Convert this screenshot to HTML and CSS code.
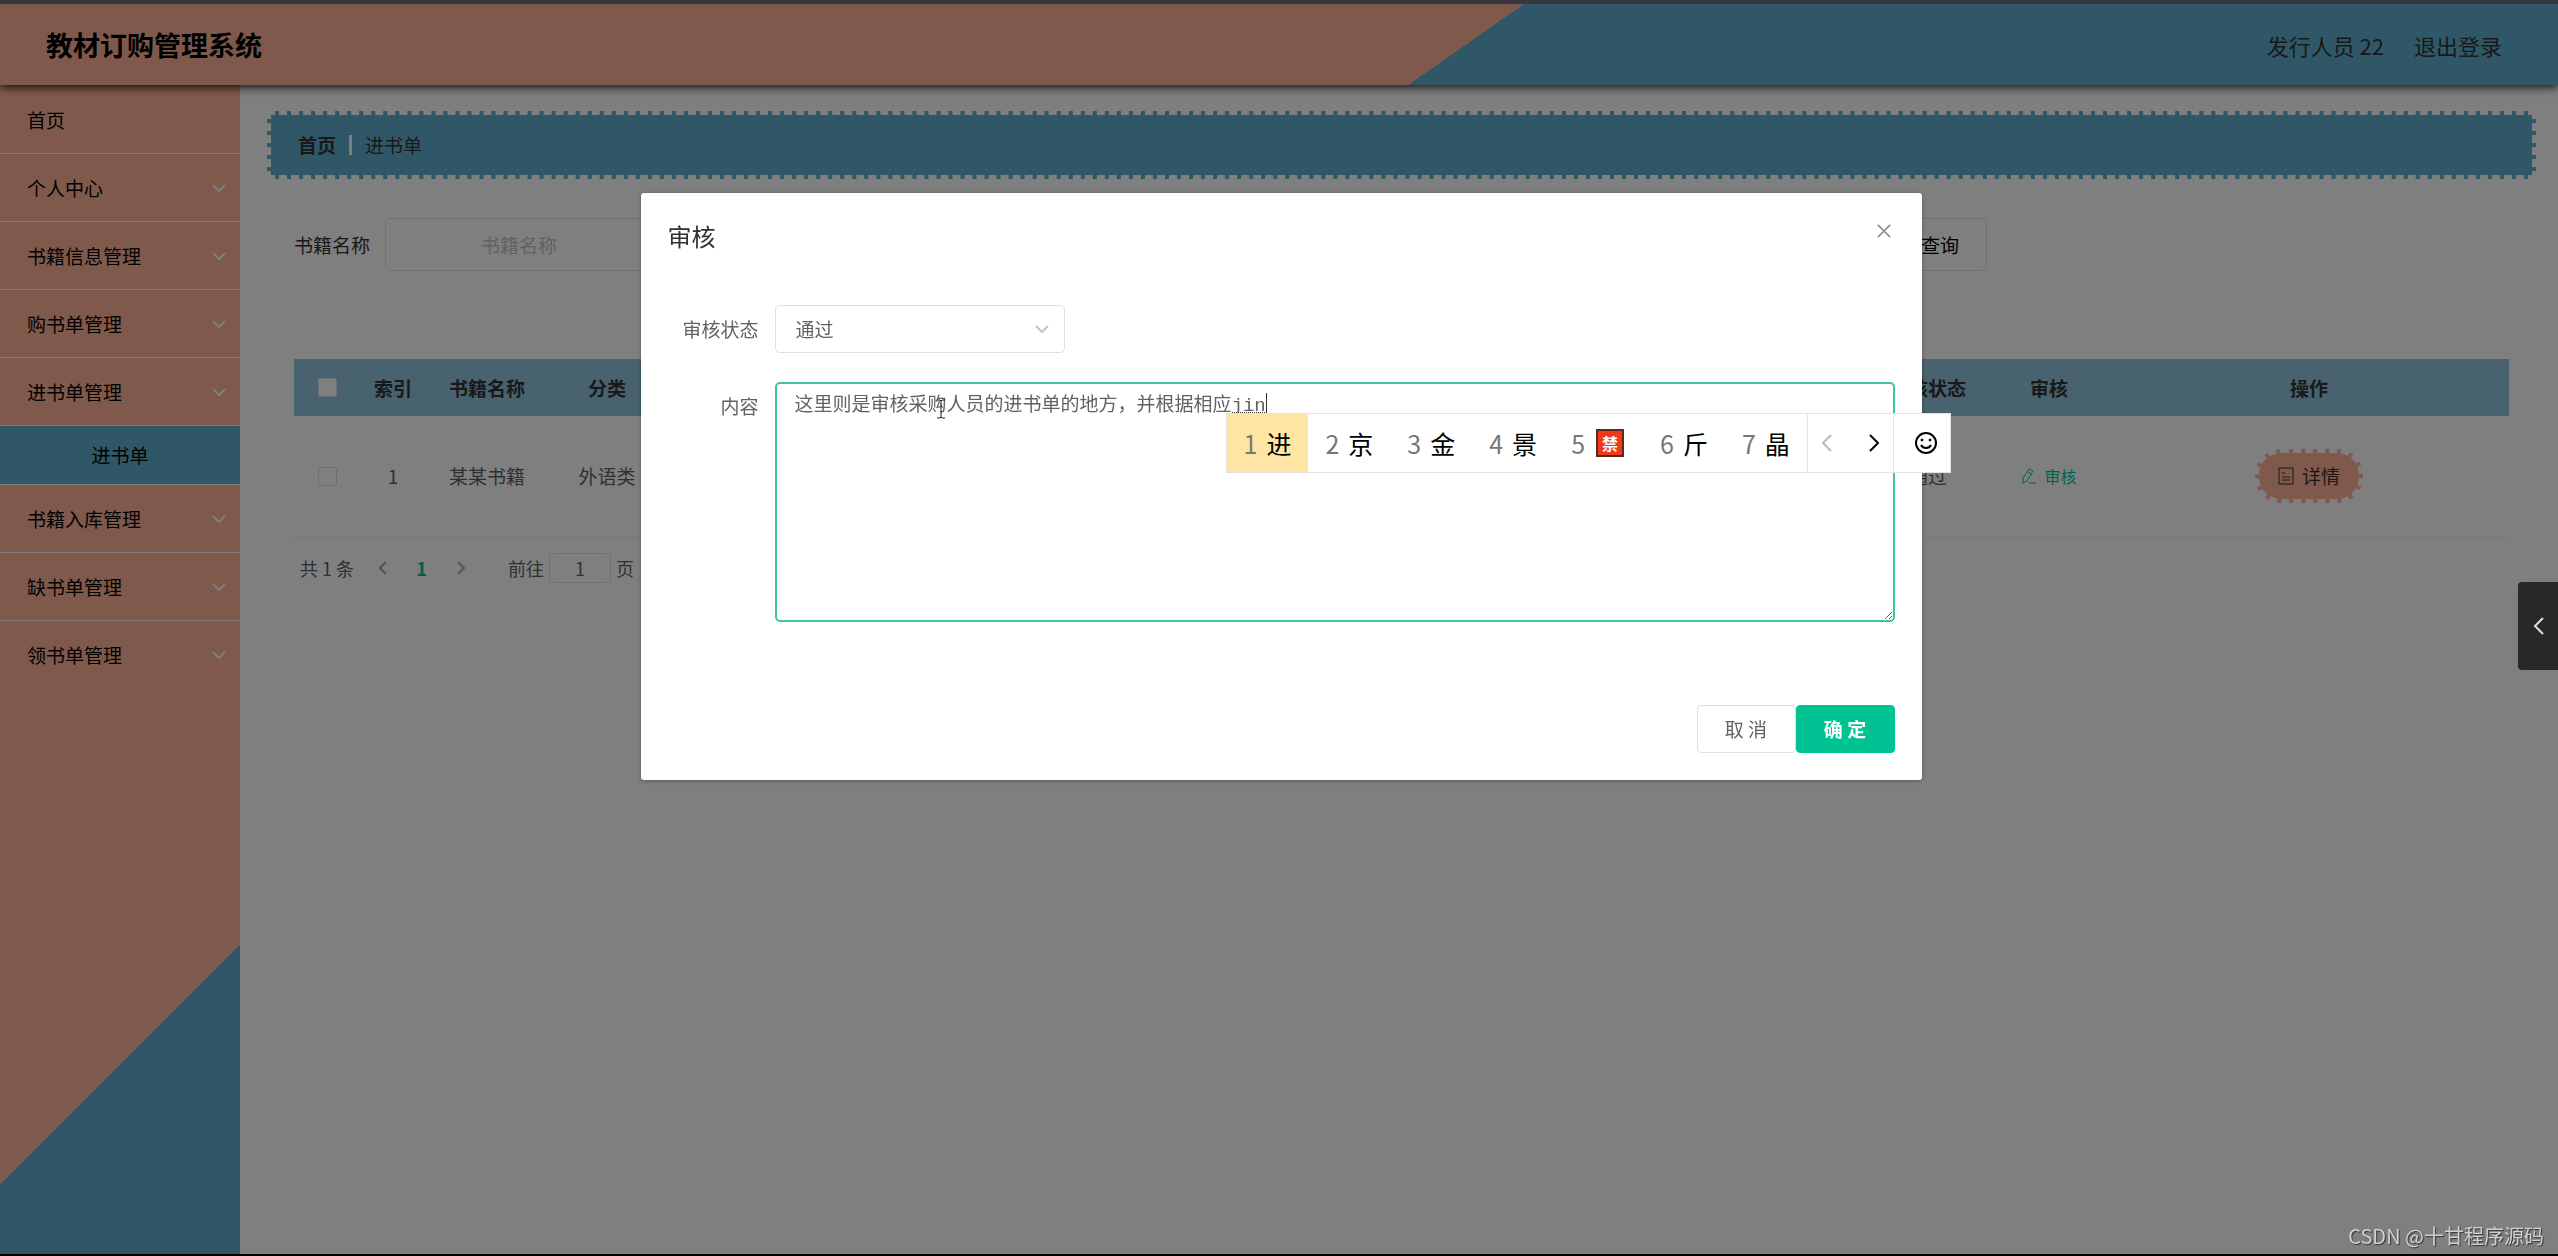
FILE: index.html
```html
<!DOCTYPE html>
<html lang="zh-CN">
<head>
    <meta charset="UTF-8">
    <meta name="viewport" content="width=device-width, initial-scale=1.0">
    <title>教材订购管理系统</title>
    <link rel="stylesheet" href="styles.css">
</head>
<body>
    <header class="header">
        <h1 class="header-title">教材订购管理系统</h1>
        <div class="header-user">
            <span>发行人员 22</span>
            <a href="#">退出登录</a>
        </div>
    </header>

    <div class="layout">
        <nav class="sidebar">
            <a class="menu-item" href="#">首页</a>
            <a class="menu-item" href="#">个人中心 <svg class="arrow" viewBox="0 0 14 8"><path d="M1 1l6 6 6-6"/></svg></a>
            <a class="menu-item" href="#">书籍信息管理 <svg class="arrow" viewBox="0 0 14 8"><path d="M1 1l6 6 6-6"/></svg></a>
            <a class="menu-item" href="#">购书单管理 <svg class="arrow" viewBox="0 0 14 8"><path d="M1 1l6 6 6-6"/></svg></a>
            <a class="menu-item" href="#">进书单管理 <svg class="arrow" viewBox="0 0 14 8"><path d="M1 1l6 6 6-6"/></svg></a>
            <a class="submenu-item" href="#">进书单</a>
            <a class="menu-item" href="#">书籍入库管理 <svg class="arrow" viewBox="0 0 14 8"><path d="M1 1l6 6 6-6"/></svg></a>
            <a class="menu-item" href="#">缺书单管理 <svg class="arrow" viewBox="0 0 14 8"><path d="M1 1l6 6 6-6"/></svg></a>
            <a class="menu-item last" href="#">领书单管理 <svg class="arrow" viewBox="0 0 14 8"><path d="M1 1l6 6 6-6"/></svg></a>
        </nav>

        <main class="main">
            <div class="breadcrumb">
                <a href="#">首页</a>
                <span class="separator"></span>
                <span>进书单</span>
            </div>

            <div class="content">
                <form class="search">
                    <label for="bookname">书籍名称</label>
                    <input type="text" id="bookname" placeholder="书籍名称">
                    <button type="button" id="query">查询</button>
                </form>

                <table class="list">
                    <colgroup>
                        <col class="col-check">
                        <col class="col-index">
                        <col class="col-name">
                        <col class="col-type">
                        <col>
                        <col class="col-status">
                        <col class="col-audit">
                        <col class="col-action">
                    </colgroup>
                    <thead>
                        <tr>
                            <th><input type="checkbox" aria-label="全选"></th>
                            <th>索引</th>
                            <th>书籍名称</th>
                            <th>分类</th>
                            <th></th>
                            <th>审核状态</th>
                            <th>审核</th>
                            <th>操作</th>
                        </tr>
                    </thead>
                    <tbody>
                        <tr>
                            <td><input type="checkbox" aria-label="选择"></td>
                            <td>1</td>
                            <td>某某书籍</td>
                            <td>外语类</td>
                            <td></td>
                            <td>通过</td>
                            <td>
                                <button type="button" class="btn-audit">
                                    <svg viewBox="0 0 16 16"><path d="M8 1l4 2-6 10-4 2V10zM7 4l3 2M8 15h7"/></svg>
                                    审核
                                </button>
                            </td>
                            <td>
                                <button type="button" class="btn-detail">
                                    <svg viewBox="0 0 16 18"><path d="M1 1h14v16H1zM4 6h3M4 10h8M4 13h8"/></svg>
                                    详情
                                </button>
                            </td>
                        </tr>
                    </tbody>
                </table>

                <div class="pagination">
                    <span>共 1 条</span>
                    <button type="button" aria-label="上一页"><svg viewBox="0 0 8 14"><path d="M7 1L1 7l6 6"/></svg></button>
                    <button type="button" class="current">1</button>
                    <button type="button" aria-label="下一页"><svg viewBox="0 0 8 14"><path d="M1 1l6 6-6 6"/></svg></button>
                    <label for="jump">前往</label>
                    <input type="text" id="jump" value="1">
                    <span>页</span>
                </div>
            </div>
        </main>
    </div>

    <div class="overlay">
        <div class="dialog" role="dialog" aria-labelledby="dialog-title">
            <div class="dialog-header">
                <h2 id="dialog-title">审核</h2>
                <button type="button" class="close" aria-label="关闭"><svg viewBox="0 0 16 16"><path d="M1 1l14 14M15 1L1 15"/></svg></button>
            </div>
            <form class="dialog-form">
                <div class="form-row">
                    <label for="status">审核状态</label>
                    <div class="select-box">
                        <select id="status">
                            <option>通过</option>
                        </select>
                        <svg class="arrow" viewBox="0 0 14 8"><path d="M1 1l6 6 6-6"/></svg>
                    </div>
                </div>
                <div class="form-row">
                    <label for="reply">内容</label>
                    <div class="textarea-box">
                        <textarea id="reply">这里则是审核采购人员的进书单的地方，并根据相应jin</textarea>
                        <span class="composing"></span>
                        <svg class="cursor" viewBox="0 0 10 20"><path d="M1 1h3l1 1 1-1h3M5 2v16M1 19h3l1-1 1 1h3"/></svg>
                        <!-- 输入法候选框 -->
                        <div class="ime">
                            <ol class="ime-list">
                                <li class="active"><i>1</i>进</li>
                                <li><i>2</i>京</li>
                                <li><i>3</i>金</li>
                                <li><i>4</i>景</li>
                                <li><i>5</i><span class="emoji">禁</span></li>
                                <li><i>6</i>斤</li>
                                <li><i>7</i>晶</li>
                            </ol>
                            <div class="ime-nav">
                                <svg class="prev" viewBox="0 0 10 18"><path d="M9 1L1 9l8 8"/></svg>
                                <svg viewBox="0 0 10 18"><path d="M1 1l8 8-8 8"/></svg>
                            </div>
                            <div class="ime-face">
                                <svg viewBox="0 0 24 24"><circle cx="12" cy="12" r="10"/><path d="M7 14c2 4 8 4 10 0"/><circle class="eye" cx="8" cy="9" r="1"/><circle class="eye" cx="16" cy="9" r="1"/></svg>
                            </div>
                        </div>
                    </div>
                </div>
            </form>
            <div class="dialog-footer">
                <button type="button">取 消</button>
                <button type="button" class="primary">确 定</button>
            </div>
        </div>
    </div>

    <button type="button" class="drawer" aria-label="展开"><svg viewBox="0 0 12 20"><path d="M10 2L2 10l8 8"/></svg></button>
    <div class="watermark">CSDN @十甘程序源码</div>
</body>
</html>
```

FILE: styles.css
```css
* {
    box-sizing: border-box;
}
body {
    display: flex;
    flex-direction: column;
    min-height: 100vh;
    margin: 0;
    border-top: 4px solid #36363e;
    border-bottom: 2px solid #000;
    font-family: "Noto Sans CJK SC", sans-serif;
    font-size: 19px;
    line-height: 28px;
    color: #606266;
    background-color: #fff;
}
button, input, select {
    font-family: inherit;
    font-size: inherit;
    line-height: inherit;
    color: inherit;
}
button {
    padding: 0;
    border: none;
    background: none;
    cursor: pointer;
}
a {
    color: inherit;
    text-decoration: none;
}
svg {
    fill: none;
    stroke: currentColor;
}

/* header */
.header {
    display: flex;
    align-items: center;
    justify-content: space-between;
    height: 81px;
    padding: 0 56px 0 46px;
    background: linear-gradient(145deg, #ffb296 57%, #60afcf 57%);
    box-shadow: 0 2px 9px rgba(0, 0, 0, 0.9);
    z-index: 1;
}
.header-title {
    margin: 0;
    font-size: 27px;
    line-height: 40px;
    font-weight: bold;
    color: #000;
}
.header-user {
    display: flex;
    gap: 30px;
    font-size: 22px;
    color: #333;
}

/* sidebar */
.layout {
    display: flex;
    flex: 1;
}
.sidebar {
    width: 240px;
    flex-shrink: 0;
    padding-top: 1px;
    background: linear-gradient(135deg, #ffb296 78%, #60afcf 78%);
    color: #000;
}
.menu-item {
    display: flex;
    align-items: center;
    justify-content: space-between;
    height: 68px;
    padding: 0 14px 0 27px;
    border-bottom: 1px solid #fff;
}
.menu-item.last {
    border-bottom: none;
}
.menu-item .arrow {
    color: #fff;
    stroke-width: 2;
}
.submenu-item {
    display: block;
    padding: 15px 0;
    border-bottom: 1px solid #fff;
    text-align: center;
    background-color: #60afcf;
}
.arrow {
    width: 14px;
    height: 8px;
}

/* main */
.main {
    flex: 1;
    padding: 26px 22px 0 27px;
}
.breadcrumb {
    display: flex;
    align-items: center;
    height: 68px;
    padding: 0 27px;
    border: 4px dashed #fff;
    border-radius: 4px;
    background-color: #60afcf;
    color: #333;
}
.breadcrumb a {
    font-weight: bold;
}
.separator {
    width: 3px;
    height: 20px;
    margin: 0 13px;
    background-color: #fff;
}
.content {
    padding: 39px 27px 0;
}
.search {
    display: flex;
    align-items: center;
    max-width: 1693px;
    color: #333;
}
.search input {
    width: 268px;
    height: 53px;
    margin-left: 15px;
    border: 1px solid #dcdfe6;
    border-radius: 5px;
    text-align: center;
}
.search input::placeholder {
    color: #c0c4cc;
}
.search button {
    height: 53px;
    margin-left: auto;
    padding: 0 27px;
    border: 1px solid #dcdfe6;
    border-radius: 5px;
    color: #000;
}

/* table */
.list {
    width: 100%;
    margin-top: 88px;
    border-collapse: collapse;
    table-layout: fixed;
}
.list th {
    height: 57px;
    padding: 0;
    background-color: #90c4de;
    color: #333;
}
.list td {
    height: 121px;
    padding: 0;
    border-bottom: 1px solid #ebeef5;
    text-align: center;
}
.col-check { width: 67px; }
.col-index { width: 64px; }
.col-name { width: 124px; }
.col-type { width: 116px; }
.col-status { width: 122px; }
.col-audit { width: 120px; }
.col-action { width: 400px; }
.list input {
    display: block;
    width: 19px;
    height: 19px;
    margin: 0 auto;
    appearance: none;
    border: 1px solid #dcdfe6;
    border-radius: 2px;
    background-color: #fff;
}
.btn-audit {
    display: inline-flex;
    align-items: center;
    gap: 7px;
    font-size: 16px;
    color: #00c292;
}
.btn-audit svg {
    width: 16px;
    height: 16px;
}
.btn-detail {
    display: inline-flex;
    align-items: center;
    justify-content: center;
    gap: 8px;
    width: 108px;
    height: 54px;
    border: 4px dashed #fff;
    border-radius: 26px;
    background-color: #ffb296;
    color: #333;
}
.btn-detail svg {
    width: 16px;
    height: 18px;
}

/* pagination */
.pagination {
    display: flex;
    align-items: center;
    padding: 15px 6px;
    font-size: 18px;
}
.pagination button {
    width: 39px;
    color: #a0a4ac;
    line-height: 0;
}
.pagination span + button {
    margin-left: 9px;
}
.pagination svg {
    width: 8px;
    height: 14px;
    stroke-width: 2;
}
.pagination .current {
    font-weight: bold;
    line-height: 28px;
    color: #00c292;
}
.pagination label {
    margin-left: 28px;
}
.pagination input {
    width: 62px;
    height: 30px;
    margin: 0 5px;
    border: 1px solid #dcdfe6;
    border-radius: 4px;
    text-align: center;
}

/* dialog */
.overlay {
    position: fixed;
    top: 4px;
    right: 0;
    bottom: 2px;
    left: 0;
    z-index: 2;
    padding: 189px 0 0 4px;
    background-color: rgba(0, 0, 0, 0.5);
}
.dialog {
    width: calc(50% + 4px);
    margin: 0 auto;
    padding: 27px;
    border-radius: 3px;
    background-color: #fff;
    box-shadow: 0 1px 4px rgba(0, 0, 0, 0.3);
}
.dialog-header {
    display: flex;
    justify-content: space-between;
}
.dialog-header h2 {
    margin: 0;
    font-size: 24px;
    line-height: 32px;
    font-weight: normal;
    color: #303133;
}
.close {
    width: 22px;
    height: 22px;
    color: #909399;
    line-height: 0;
}
.close svg {
    width: 14px;
    height: 14px;
    stroke-width: 2;
}
.dialog-form {
    padding: 53px 0 83px;
}
.form-row {
    display: flex;
}
.form-row + .form-row {
    margin-top: 29px;
}
.form-row > label {
    width: 107px;
    padding-right: 16px;
    text-align: right;
    line-height: 48px;
}
.select-box {
    position: relative;
    width: 290px;
}
.select-box select {
    width: 100%;
    height: 48px;
    padding: 0 20px;
    appearance: none;
    border: 1px solid #dcdfe6;
    border-radius: 5px;
    background-color: #fff;
}
.select-box .arrow {
    position: absolute;
    top: 20px;
    right: 16px;
    color: #c0c4cc;
    stroke-width: 2;
}
.textarea-box {
    position: relative;
    flex: 1;
}
.textarea-box textarea {
    display: block;
    width: 100%;
    height: 240px;
    padding: 8px 18px;
    border: 2px solid #3fc3a6;
    border-radius: 5px;
    outline: none;
    font-family: "Liberation Mono", "Noto Sans CJK SC", monospace;
    font-size: 19px;
    line-height: 28px;
    color: #606266;
}
/* underline and caret of the text being typed */
.composing {
    position: absolute;
    top: 11px;
    left: 457px;
    width: 35px;
    height: 20px;
    border-right: 1px solid #333;
    border-bottom: 1px dotted #333;
}
.cursor {
    position: absolute;
    top: 17px;
    left: 161px;
    width: 10px;
    height: 20px;
    color: #222;
}

/* ime */
.ime {
    position: absolute;
    top: 31px;
    left: 451px;
    display: flex;
    height: 60px;
    border: 1px solid #e2e2e2;
    background-color: #fff;
    font-size: 25px;
    color: #000;
}
.ime-list {
    display: flex;
    margin: 0;
    padding: 0;
    list-style: none;
}
.ime-list li {
    display: flex;
    align-items: center;
    gap: 9px;
    padding: 0 17px;
}
.ime-list i {
    font-style: normal;
    color: #777;
}
.ime-list .active {
    background-color: #ffe5a3;
}
.emoji {
    width: 28px;
    margin: 0 2px;
    border: 2px solid #5a2a20;
    background-color: #f03a17;
    font-size: 16px;
    line-height: 24px;
    font-weight: bold;
    text-align: center;
    color: #fff;
}
.ime-nav {
    display: flex;
    align-items: center;
    justify-content: space-between;
    width: 87px;
    padding: 0 14px;
    border-left: 1px solid #e2e2e2;
    border-right: 1px solid #e2e2e2;
}
.ime-nav svg {
    width: 10px;
    height: 18px;
    stroke-width: 2;
}
.ime-nav .prev {
    color: #bbb;
}
.ime-face {
    display: flex;
    align-items: center;
    justify-content: center;
    width: 56px;
    padding-left: 8px;
}
.ime-face svg {
    width: 24px;
    height: 24px;
    stroke-width: 2;
}
.ime-face .eye {
    fill: #000;
    stroke-width: 1;
}

.dialog-footer {
    display: flex;
    justify-content: flex-end;
}
.dialog-footer button {
    width: 99px;
    height: 48px;
    border: 1px solid #dcdfe6;
    border-radius: 4px;
}
.dialog-footer .primary {
    border-color: #00c292;
    background-color: #00c292;
    font-weight: bold;
    color: #fff;
}

.drawer {
    position: fixed;
    top: 582px;
    right: 0;
    z-index: 3;
    width: 40px;
    height: 88px;
    padding: 4px 0 0 2px;
    border-radius: 4px 0 0 4px;
    background-color: #282828;
    color: #ddd;
}
.drawer svg {
    width: 12px;
    height: 20px;
    stroke-width: 2;
}
.watermark {
    position: fixed;
    right: 14px;
    bottom: 6px;
    z-index: 3;
    font-size: 20px;
    color: #d0d0d0;
    text-shadow: 1px 1px 1px #333;
}
```
